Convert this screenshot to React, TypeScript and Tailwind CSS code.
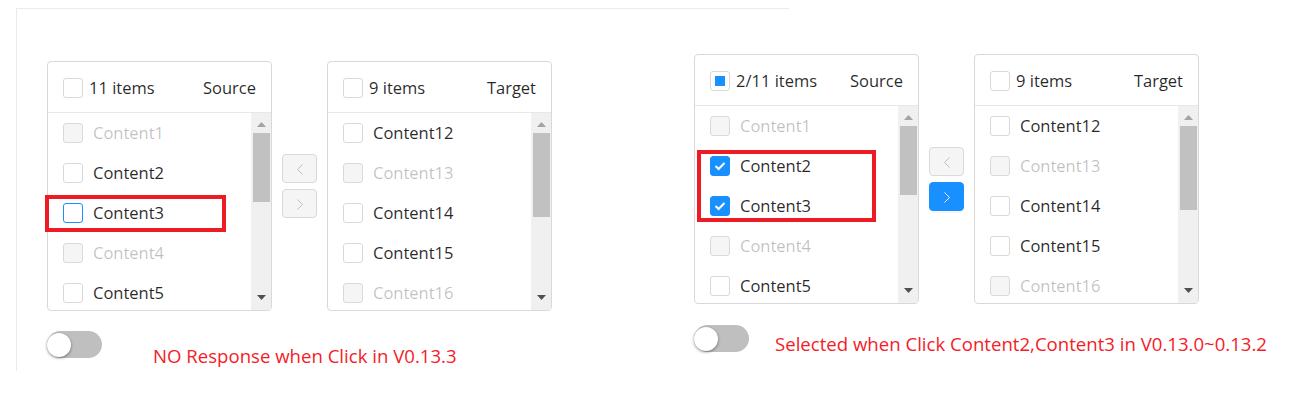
import React from "react";

type Item = {
  label: string;
  disabled?: boolean;
  checked?: boolean;
  focused?: boolean;
};

type CheckState = "empty" | "disabled" | "checked" | "focused" | "indeterminate";

const Checkbox = ({ state }: { state: CheckState }) => {
  if (state === "checked") {
    return (
      <span className="w-[20px] h-[20px] shrink-0 rounded-[3px] bg-[#1890ff] border border-[#1890ff] flex items-center justify-center">
        <svg width="12" height="10" viewBox="0 0 12 10">
          <polyline points="1.5,5 4.6,8 10.5,2" fill="none" stroke="#fff" strokeWidth="2" />
        </svg>
      </span>
    );
  }
  if (state === "indeterminate") {
    return (
      <span className="w-[20px] h-[20px] shrink-0 rounded-[3px] bg-white border border-[#d9d9d9] flex items-center justify-center">
        <span className="w-[10px] h-[10px] bg-[#1890ff]" />
      </span>
    );
  }
  if (state === "disabled") {
    return <span className="w-[20px] h-[20px] shrink-0 rounded-[3px] bg-[#f5f5f5] border border-[#d9d9d9]" />;
  }
  if (state === "focused") {
    return <span className="w-[20px] h-[20px] shrink-0 rounded-[3px] bg-white border border-[#1890ff]" />;
  }
  return <span className="w-[20px] h-[20px] shrink-0 rounded-[3px] bg-white border border-[#d9d9d9]" />;
};

const Scrollbar = ({ thumb }: { thumb: number }) => (
  <div className="w-[20px] shrink-0 bg-[#f0f0f0] flex flex-col items-center">
    <div className="h-[20px] w-full flex items-center justify-center pt-[2px]">
      <svg width="9" height="5" viewBox="0 0 9 5">
        <polygon points="0,5 9,5 4.5,0" fill="#a3a3a3" />
      </svg>
    </div>
    <div className="w-[17px] bg-[#c1c1c1]" style={{ height: thumb }} />
    <div className="flex-1" />
    <div className="h-[20px] w-full flex items-start justify-center pt-[5px]">
      <svg width="9" height="5" viewBox="0 0 9 5">
        <polygon points="0,0 9,0 4.5,5" fill="#505050" />
      </svg>
    </div>
  </div>
);

const Panel = ({
  count,
  title,
  headState,
  items,
  thumb,
  children,
}: {
  count: string;
  title: string;
  headState: CheckState;
  items: Item[];
  thumb: number;
  children?: React.ReactNode;
}) => (
  <div className="relative w-[225px] h-[250px] shrink-0 border border-[#d9d9d9] rounded-[4px] bg-white flex flex-col">
    <div className="h-[51px] shrink-0 border-b border-[#e8e8e8] flex items-center pl-[15px] pr-[15px] pt-[1px]">
      <Checkbox state={headState} />
      <span className="ml-[6px] text-[rgba(0,0,0,0.85)]">{count}</span>
      <span className="ml-auto text-[rgba(0,0,0,0.85)]">{title}</span>
    </div>
    <div className="flex-1 min-h-0 flex overflow-hidden">
      <div className="flex-1 overflow-hidden">
        {items.map((it) => (
          <div key={it.label} className="h-[40px] flex items-center pl-[15px]">
            <Checkbox
              state={
                it.disabled ? "disabled" : it.checked ? "checked" : it.focused ? "focused" : "empty"
              }
            />
            <span
              className={
                it.disabled
                  ? "ml-[10px] text-[rgba(0,0,0,0.25)]"
                  : "ml-[10px] text-[rgba(0,0,0,0.85)]"
              }
            >
              {it.label}
            </span>
          </div>
        ))}
      </div>
      <Scrollbar thumb={thumb} />
    </div>
    {children}
  </div>
);

const Chevron = ({ dir, color }: { dir: "left" | "right"; color: string }) => (
  <svg width="8" height="11" viewBox="0 0 8 11">
    <polyline
      points={dir === "left" ? "6.5,0.5 1.5,5.5 6.5,10.5" : "1.5,0.5 6.5,5.5 1.5,10.5"}
      fill="none"
      stroke={color}
      strokeWidth="1"
    />
  </svg>
);

const Operations = ({ rightActive }: { rightActive?: boolean }) => (
  <div className="flex flex-col gap-[6px] mx-[10px] shrink-0">
    <div className="w-[35px] h-[29px] rounded-[4px] border border-[#d9d9d9] bg-[#f5f5f5] flex items-center justify-center pt-[2px]">
      <Chevron dir="left" color="#bfbfbf" />
    </div>
    {rightActive ? (
      <div className="w-[35px] h-[29px] rounded-[4px] border border-[#1890ff] bg-[#1890ff] flex items-center justify-center pt-[2px] shadow-[0_2px_0_rgba(0,0,0,0.03)]">
        <Chevron dir="right" color="#ffffff" />
      </div>
    ) : (
      <div className="w-[35px] h-[29px] rounded-[4px] border border-[#d9d9d9] bg-[#f5f5f5] flex items-center justify-center pt-[2px]">
        <Chevron dir="right" color="#bfbfbf" />
      </div>
    )}
  </div>
);

const Toggle = () => (
  <div className="relative w-[55px] h-[27px] shrink-0 rounded-full bg-[#bfbfbf]">
    <div className="absolute left-0 top-[1.5px] w-[24px] h-[24px] rounded-full bg-white shadow-[0_1px_3px_rgba(0,0,0,0.45)]" />
  </div>
);

const targetItems: Item[] = [
  { label: "Content12" },
  { label: "Content13", disabled: true },
  { label: "Content14" },
  { label: "Content15" },
  { label: "Content16", disabled: true },
];

export default function App() {
  return (
    <div className="w-[1289px] h-[404px] bg-white flex items-start font-['Open_Sans','Noto_Sans',sans-serif] text-[16.5px] leading-[24px]">
      {/* before: v0.13.3 */}
      <div className="mt-[8px] ml-[16px] w-[773px] h-[363px] shrink-0 border-t border-l border-[#ebebeb] pt-[52px] pl-[30px]">
        <div className="flex items-center">
          <Panel
            count="11 items"
            title="Source"
            headState="empty"
            thumb={69}
            items={[
              { label: "Content1", disabled: true },
              { label: "Content2" },
              { label: "Content3", focused: true },
              { label: "Content4", disabled: true },
              { label: "Content5" },
            ]}
          >
            <div className="absolute left-[-3px] top-[133px] w-[181px] h-[37px] border-[4px] border-[#ed1c24]" />
          </Panel>
          <Operations />
          <Panel count="9 items" title="Target" headState="empty" thumb={84} items={targetItems} />
        </div>
        <div className="mt-[20px] flex items-start">
          <Toggle />
          <span className="ml-[51px] mt-[12px] text-[#f41c28] text-[18.6px] leading-[26px]">
            NO Response when Click in V0.13.3
          </span>
        </div>
      </div>

      {/* after: v0.13.0 ~ 0.13.2 */}
      <div className="mt-[54px] ml-[-95px] shrink-0">
        <div className="flex items-center">
          <Panel
            count="2/11 items"
            title="Source"
            headState="indeterminate"
            thumb={69}
            items={[
              { label: "Content1", disabled: true },
              { label: "Content2", checked: true },
              { label: "Content3", checked: true },
              { label: "Content4", disabled: true },
              { label: "Content5" },
            ]}
          >
            <div className="absolute left-[2px] top-[95px] w-[179px] h-[72px] border-[4px] border-[#ed1c24]" />
          </Panel>
          <Operations rightActive />
          <Panel count="9 items" title="Target" headState="empty" thumb={84} items={targetItems} />
        </div>
        <div className="mt-[21px] flex items-start">
          <Toggle />
          <span className="ml-[26px] mt-[6px] text-[#f41c28] text-[18.6px] leading-[26px]">
            Selected when Click Content2,Content3 in V0.13.0~0.13.2
          </span>
        </div>
      </div>
    </div>
  );
}
